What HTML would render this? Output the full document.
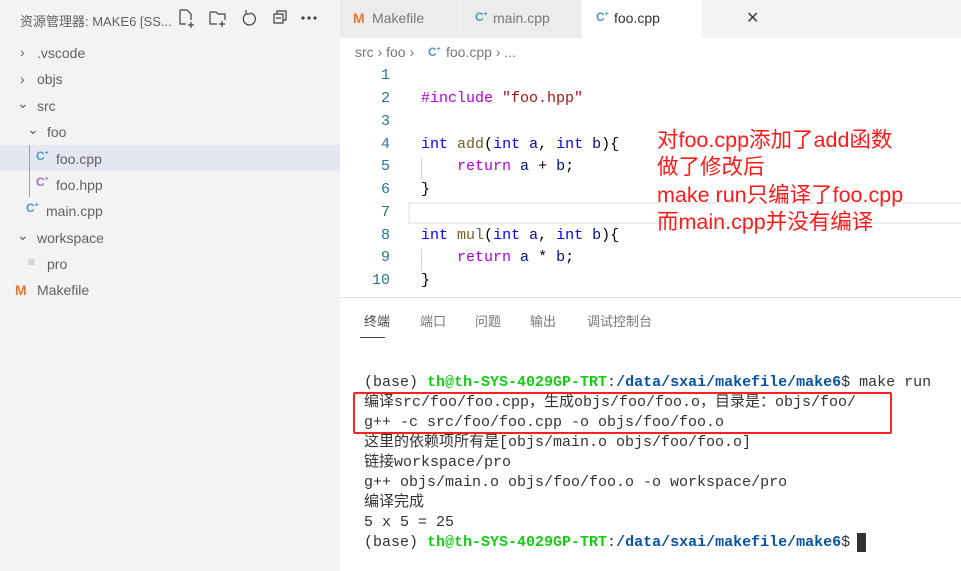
<!DOCTYPE html>
<html><head><meta charset="utf-8"><style>
*{margin:0;padding:0;box-sizing:border-box}
body{width:961px;height:571px;overflow:hidden;background:#fff;font-family:"Liberation Sans","Noto Sans CJK SC",sans-serif;position:relative}
.abs{position:absolute;white-space:pre}
#side{position:absolute;left:0;top:0;width:340px;height:571px;background:#f3f3f3}
.it{position:absolute;font-size:14px;color:#616161;white-space:pre}
.ln{position:absolute;width:50px;left:340px;text-align:right;color:#237893;font-family:"Liberation Mono",monospace;font-size:15px}
.cl{position:absolute;left:421px;font-family:"Liberation Mono",monospace;font-size:15px;color:#000;white-space:pre}
.kw{color:#0000ff}.fn{color:#795e26}.pp{color:#af00db}.str{color:#a31515}.v{color:#001080}
.t{position:absolute;left:364px;font-family:"Liberation Mono","Noto Sans CJK SC",monospace;font-size:15px;line-height:20px;height:20px;color:#333;white-space:pre}
.g{color:#14ce14;font-weight:bold}.b{color:#0451a5;font-weight:bold}
.ann{position:absolute;left:657px;color:#ff1a1a;font-size:21.5px;line-height:26px;font-family:"Liberation Sans","Noto Sans CJK SC",sans-serif;white-space:pre}
</style></head><body>
<div id="side">
<div class="it" style="left:20px;top:11px;font-size:13px">资源管理器: MAKE6 [SS...</div>
<svg class="abs" style="left:176px;top:8px" width="150" height="20" fill="none" stroke="#424242" stroke-width="1.2">
<path d="M4 2h7l4 4v6M4 2v14h6M15 14v6M12 17h6"/>
<path d="M34 4h6l2 2h7v6M34 4v12h7M46 13v6M43 16h6"/>
<path d="M70 6a6 6 0 1 0 4 -1M70 2v4h4"/>
<path d="M98 6h9v9h-9zM101 6V3h9v9h-3M100 10h5"/>
<circle cx="127" cy="10" r="1" fill="#424242"/><circle cx="133" cy="10" r="1" fill="#424242"/><circle cx="139" cy="10" r="1" fill="#424242"/>
</svg>
<div class="it" style="left:20px;top:44px">›</div><div class="it" style="left:37px;top:45px">.vscode</div>
<div class="it" style="left:20px;top:71px">›</div><div class="it" style="left:37px;top:71px">objs</div>
<div class="it" style="left:17px;top:95px">⌄</div><div class="it" style="left:37px;top:98px">src</div>
<div class="it" style="left:27px;top:121px">⌄</div><div class="it" style="left:47px;top:124px">foo</div>
<div style="position:absolute;left:0;top:145px;width:340px;height:26px;background:#e4e6f1"></div>
<div style="position:absolute;left:29px;top:145px;width:1px;height:52px;background:#a0a0a0"></div>
<div class="it" style="left:36px;top:149px;color:#519aba;font-weight:bold;font-size:12px">C<sup style="font-size:7px">+</sup></div><div class="it" style="left:56px;top:151px">foo.cpp</div>
<div class="it" style="left:36px;top:175px;color:#a074c4;font-weight:bold;font-size:12px">C<sup style="font-size:7px">+</sup></div><div class="it" style="left:56px;top:177px">foo.hpp</div>
<div class="it" style="left:26px;top:201px;color:#519aba;font-weight:bold;font-size:12px">C<sup style="font-size:7px">+</sup></div><div class="it" style="left:46px;top:203px">main.cpp</div>
<div class="it" style="left:17px;top:227px">⌄</div><div class="it" style="left:37px;top:230px">workspace</div>
<div class="it" style="left:28px;top:255px;color:#aaa;font-size:12px">≡</div><div class="it" style="left:47px;top:256px">pro</div>
<div class="it" style="left:15px;top:282px;color:#e37933;font-weight:bold">M</div><div class="it" style="left:37px;top:282px">Makefile</div>
</div>
<div style="position:absolute;left:340px;top:0;width:621px;height:38px;background:#f3f3f3"></div>
<div style="position:absolute;left:340px;top:0;width:120px;height:38px;background:#ececec"></div>
<div style="position:absolute;left:461px;top:0;width:120px;height:38px;background:#ececec"></div>
<div style="position:absolute;left:582px;top:0;width:120px;height:38px;background:#fff"></div>
<div class="abs" style="left:353px;top:10px;color:#e37933;font-weight:bold;font-size:14px">M</div><div class="abs" style="left:372px;top:10px;color:#777;font-size:14px">Makefile</div>
<div class="abs" style="left:475px;top:10px;color:#519aba;font-weight:bold;font-size:12px">C<sup style="font-size:7px">+</sup></div><div class="abs" style="left:493px;top:10px;color:#777;font-size:14px">main.cpp</div>
<div class="abs" style="left:596px;top:10px;color:#519aba;font-weight:bold;font-size:12px">C<sup style="font-size:7px">+</sup></div><div class="abs" style="left:614px;top:10px;color:#333;font-size:14px">foo.cpp</div>
<div class="abs" style="left:746px;top:8px;color:#424242;font-size:16px">✕</div>
<div class="abs" style="left:355px;top:44px;color:#777;font-size:14px">src › foo › </div>
<div class="abs" style="left:428px;top:45px;color:#519aba;font-weight:bold;font-size:12px">C<sup style="font-size:7px">+</sup></div><div class="abs" style="left:446px;top:44px;color:#777;font-size:14px">foo.cpp › ...</div>
<div class="ln" style="top:67px">1</div><div class="ln" style="top:90px">2</div><div class="ln" style="top:113px">3</div><div class="ln" style="top:136px">4</div><div class="ln" style="top:158px">5</div><div class="ln" style="top:181px">6</div><div class="ln" style="top:204px">7</div><div class="ln" style="top:227px">8</div><div class="ln" style="top:249px">9</div><div class="ln" style="top:272px">10</div>
<div style="position:absolute;left:408px;top:202px;width:553px;height:22px;border:2px solid #eee;border-right:none"></div>
<div style="position:absolute;left:421px;top:158px;width:1px;height:22px;background:#d3d3d3"></div>
<div style="position:absolute;left:421px;top:249px;width:1px;height:22px;background:#d3d3d3"></div>
<div class="cl" style="top:90px"><span class="pp">#include</span> <span class="str">"foo.hpp"</span></div>
<div class="cl" style="top:136px"><span class="kw">int</span> <span class="fn">add</span>(<span class="kw">int</span> <span class="v">a</span>, <span class="kw">int</span> <span class="v">b</span>){</div>
<div class="cl" style="top:158px">    <span class="pp">return</span> <span class="v">a</span> + <span class="v">b</span>;</div>
<div class="cl" style="top:181px">}</div>
<div class="cl" style="top:227px"><span class="kw">int</span> <span class="fn">mul</span>(<span class="kw">int</span> <span class="v">a</span>, <span class="kw">int</span> <span class="v">b</span>){</div>
<div class="cl" style="top:249px">    <span class="pp">return</span> <span class="v">a</span> * <span class="v">b</span>;</div>
<div class="cl" style="top:272px">}</div>
<div class="ann" style="top:127px">对foo.cpp添加了add函数</div>
<div class="ann" style="top:154px">做了修改后</div>
<div class="ann" style="top:182px">make run只编译了foo.cpp</div>
<div class="ann" style="top:209px">而main.cpp并没有编译</div>
<div style="position:absolute;left:340px;top:297px;width:621px;height:1px;background:#e0e0e0"></div>
<div class="abs" style="left:364px;top:311px;font-size:13px;color:#424242">终端</div>
<div style="position:absolute;left:360px;top:337px;width:25px;height:1px;background:#424242"></div>
<div class="abs" style="left:420px;top:311px;font-size:13px;color:#777">端口</div>
<div class="abs" style="left:475px;top:311px;font-size:13px;color:#777">问题</div>
<div class="abs" style="left:530px;top:311px;font-size:13px;color:#777">输出</div>
<div class="abs" style="left:587px;top:311px;font-size:13px;color:#777">调试控制台</div>
<div class="t" style="top:373px">(base) <span class="g">th@th-SYS-4029GP-TRT</span>:<span class="b">/data/sxai/makefile/make6</span>$ make run</div>
<div class="t" style="top:393px">编译src/foo/foo.cpp，生成objs/foo/foo.o，目录是：objs/foo/</div>
<div class="t" style="top:413px">g++ -c src/foo/foo.cpp -o objs/foo/foo.o</div>
<div class="t" style="top:433px">这里的依赖项所有是[objs/main.o objs/foo/foo.o]</div>
<div class="t" style="top:453px">链接workspace/pro</div>
<div class="t" style="top:473px">g++ objs/main.o objs/foo/foo.o -o workspace/pro</div>
<div class="t" style="top:493px">编译完成</div>
<div class="t" style="top:513px">5 x 5 = 25</div>
<div class="t" style="top:533px">(base) <span class="g">th@th-SYS-4029GP-TRT</span>:<span class="b">/data/sxai/makefile/make6</span>$ </div>
<div style="position:absolute;left:857px;top:533px;width:9px;height:19px;background:#333"></div>
<div style="position:absolute;left:353px;top:392px;width:539px;height:42px;border:2px solid #ff2020;border-radius:2px"></div>
</body></html>
